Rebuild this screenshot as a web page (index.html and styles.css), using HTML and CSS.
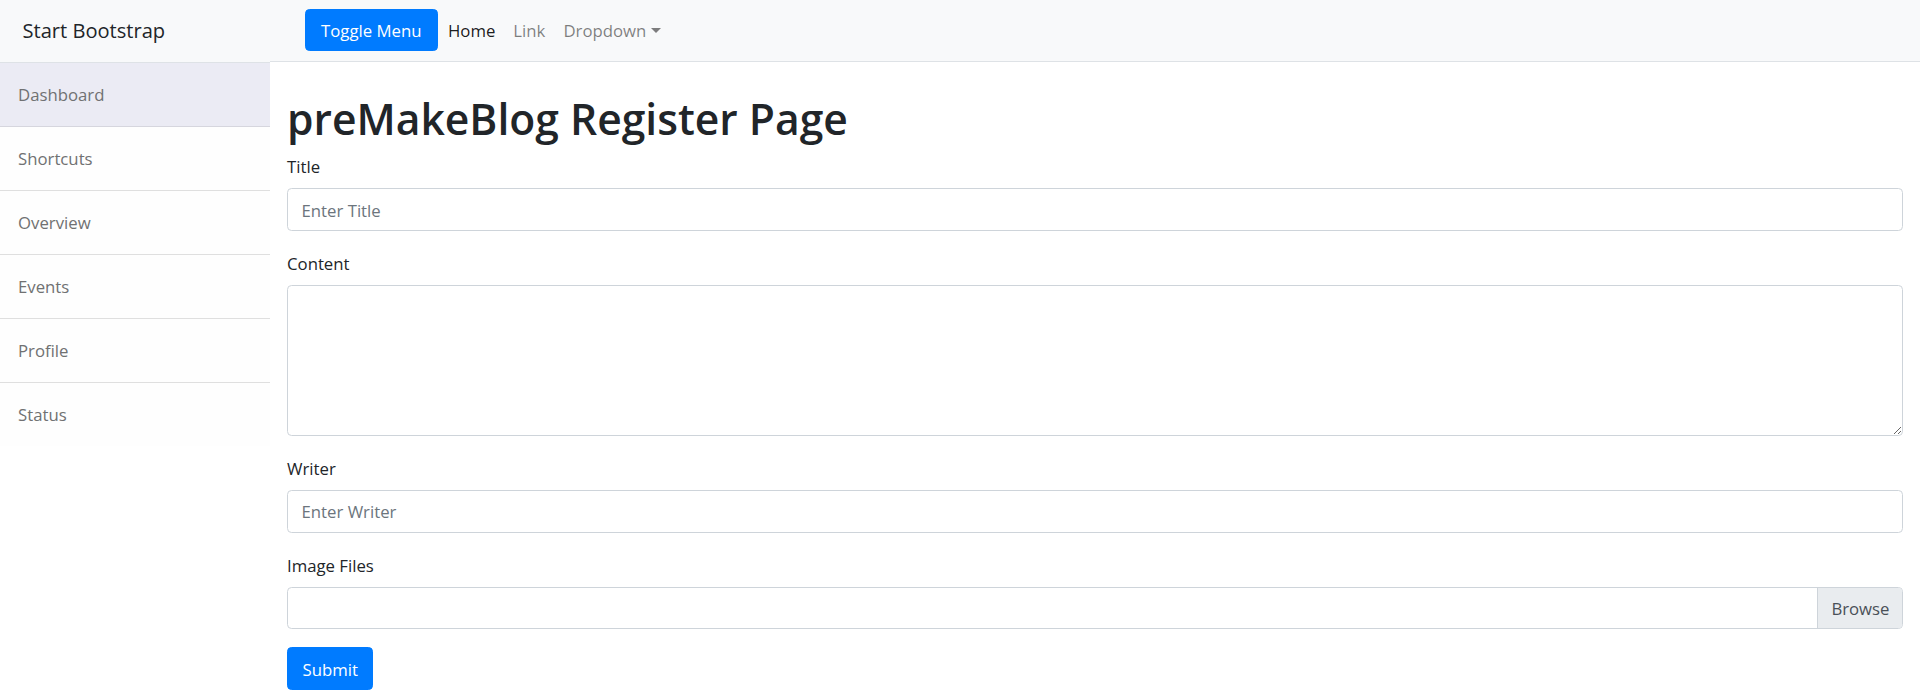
FILE: index.html
```html
<!DOCTYPE html>
<html lang="en">
<head>
<meta charset="utf-8">
<title>preMakeBlog Register Page</title>
<link rel="stylesheet" href="styles.css">
</head>
<body>
<div class="wrapper">
  <aside class="sidebar">
    <div class="sidebar-heading">Start Bootstrap</div>
    <nav class="list-group">
      <a href="#" class="list-item is-hover">Dashboard</a>
      <a href="#" class="list-item">Shortcuts</a>
      <a href="#" class="list-item">Overview</a>
      <a href="#" class="list-item">Events</a>
      <a href="#" class="list-item">Profile</a>
      <a href="#" class="list-item">Status</a>
    </nav>
  </aside>
  <div class="page">
    <header class="navbar">
      <button class="btn btn-primary" type="button">Toggle Menu</button>
      <ul class="nav">
        <li><a href="#" class="nav-link active">Home</a></li>
        <li><a href="#" class="nav-link">Link</a></li>
        <li><a href="#" class="nav-link dropdown-toggle">Dropdown</a></li>
      </ul>
    </header>
    <main class="container">
      <h1 class="page-title">preMakeBlog Register Page</h1>
      <form class="form">
        <div class="form-group">
          <label class="form-label" for="title">Title</label>
          <input class="form-control" id="title" type="text" placeholder="Enter Title">
        </div>
        <div class="form-group">
          <label class="form-label" for="content">Content</label>
          <textarea class="form-control textarea" id="content" rows="5"></textarea>
        </div>
        <div class="form-group">
          <label class="form-label" for="writer">Writer</label>
          <input class="form-control" id="writer" type="text" placeholder="Enter Writer">
        </div>
        <div class="form-group">
          <span class="form-label">Image Files</span>
          <input class="file-hidden" id="files" type="file" multiple hidden>
          <label class="file-box" for="files">
            <span class="file-name"></span>
            <span class="file-browse">Browse</span>
          </label>
        </div>
        <button class="btn btn-primary btn-submit" type="submit">Submit</button>
      </form>
    </main>
  </div>
</div>
</body>
</html>
```
FILE: styles.css
```css
* { box-sizing: border-box; }

html, body {
  margin: 0;
  padding: 0;
}

body {
  font-family: "Open Sans", "Noto Sans", "Liberation Sans", sans-serif;
  font-size: 16.75px;
  line-height: 27px;
  color: #212529;
  background: #fff;
}

a { text-decoration: none; }

.wrapper {
  display: flex;
  min-height: 700px;
}

/* Sidebar */
.sidebar {
  width: 270px;
  flex-shrink: 0;
  background: #fff;
}

.sidebar-heading {
  height: 62.5px;
  display: flex;
  align-items: center;
  padding: 0 22.5px;
  padding-bottom: 1px;
  font-size: 20.1px;
  background: #f8f9fa;
  border-bottom: 1px solid #dee2e6;
  color: #212529;
}

.list-group {
  display: flex;
  flex-direction: column;
}

.list-item {
  height: 64px;
  display: flex;
  align-items: center;
  padding: 1px 18px 0;
  background: #fefefe;
  color: #707172;
  border-bottom: 1px solid #dfdfdf;
}

.list-item:last-child {
  height: 63px;
  border-bottom: 0;
}

.list-item.is-hover {
  background: #ebebf4;
  border-bottom-color: #d6d6de;
}

/* Page */
.page {
  flex: 1;
  min-width: 0;
}

.navbar {
  height: 62px;
  display: flex;
  align-items: center;
  padding: 0 35px 1px;
  background: #f8f9fa;
  border-bottom: 1px solid #dee2e6;
}

.btn {
  font-family: inherit;
  font-size: 16.75px;
  line-height: 27px;
  height: 42.75px;
  padding: 1px 15px 0;
  border: 1px solid transparent;
  border-radius: 4.5px;
  cursor: pointer;
}

.btn-submit {
  padding: 1px 14.5px 0;
}

.btn-primary {
  background: #007bff;
  border-color: #007bff;
  color: #fff;
}

.nav {
  list-style: none;
  margin: 0 0 0 1.5px;
  padding: 0;
  display: flex;
  align-items: center;
}

.nav-link {
  display: block;
  padding: 9px 9px;
  color: rgba(0, 0, 0, 0.5);
}

.nav-link.active {
  color: rgba(0, 0, 0, 0.9);
}

.dropdown-toggle::after {
  content: "";
  display: inline-block;
  margin-left: 4.6px;
  vertical-align: 3.6px;
  border-top: 5.4px solid;
  border-right: 5.4px solid transparent;
  border-left: 5.4px solid transparent;
  border-bottom: 0;
}

.container {
  padding: 0 17px;
}

.page-title {
  margin: 29px 0 7px;
  font-size: 42.6px;
  line-height: 54px;
  font-weight: 600;
  color: #212529;
}

.form-group {
  margin-bottom: 18px;
}

.form-label {
  display: block;
  height: 27px;
  padding-top: 1px;
  margin-bottom: 9px;
  line-height: 27px;
}

.form-control {
  display: block;
  width: 100%;
  height: 42.75px;
  padding: 7.5px 13.5px 6px;
  font-family: inherit;
  font-size: 16.75px;
  line-height: 27px;
  color: #495057;
  background: #fff;
  border: 1px solid #ced4da;
  border-radius: 4.5px;
  outline: none;
}

.form-control::placeholder {
  color: #6c757d;
  opacity: 1;
}

.textarea {
  height: 151px;
  resize: vertical;
  overflow: auto;
}

.file-box {
  display: flex;
  height: 42.75px;
  border: 1px solid #ced4da;
  border-radius: 4.5px;
  background: #fff;
  overflow: hidden;
  cursor: pointer;
}

.file-name {
  flex: 1;
}

.file-browse {
  display: flex;
  align-items: center;
  padding: 1px 12.5px 0 13px;
  background: #e9ecef;
  color: #495057;
  border-left: 1px solid #ced4da;
}
```
